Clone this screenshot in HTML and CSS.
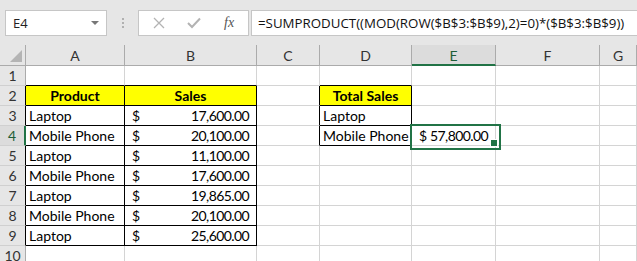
FILE: index.html
```html
<!DOCTYPE html>
<html lang="en">
<head>
  <meta charset="UTF-8">
  <title>SUMPRODUCT every other row</title>
  <link rel="stylesheet" href="styles.css">
</head>
<body>
  <div class="toolbar">
    <div class="namebox">
      <span>E4</span>
      <span class="caret"></span>
    </div>
    <div class="grip"><i></i><i></i><i></i></div>
    <div class="fxbox">
      <svg class="btn" width="12" height="12" viewBox="0 0 12 12">
        <path d="M1 1 L11 11 M11 1 L1 11" stroke="#b3b3b3" stroke-width="1.3" fill="none"/>
      </svg>
      <svg class="btn" width="14" height="12" viewBox="0 0 14 12">
        <path d="M1 6 L5 10 L13 1.5" stroke="#b3b3b3" stroke-width="2" fill="none"/>
      </svg>
      <span class="fx">fx</span>
    </div>
    <div class="formula">=SUMPRODUCT((MOD(ROW($B$3:$B$9),2)=0)*($B$3:$B$9))</div>
  </div>

  <div class="sheet">
    <!-- column headers -->
    <div class="hd corner"><span class="tri"></span></div>
    <div class="hd">A</div>
    <div class="hd">B</div>
    <div class="hd">C</div>
    <div class="hd">D</div>
    <div class="hd sel-col">E</div>
    <div class="hd">F</div>
    <div class="hd">G</div>

    <!-- row 1 -->
    <div class="rh">1</div>
    <div class="c bb"></div>
    <div class="c bb"></div>
    <div class="c"></div>
    <div class="c bb"></div>
    <div class="c"></div>
    <div class="c"></div>
    <div class="c"></div>

    <!-- row 2 -->
    <div class="rh br">2</div>
    <div class="c box head">Product</div>
    <div class="c box head">Sales</div>
    <div class="c br"></div>
    <div class="c box head">Total Sales</div>
    <div class="c"></div>
    <div class="c"></div>
    <div class="c"></div>

    <!-- row 3 -->
    <div class="rh br">3</div>
    <div class="c box">Laptop</div>
    <div class="c box money"><span>$</span><span class="num">17,600.00</span></div>
    <div class="c br"></div>
    <div class="c box">Laptop</div>
    <div class="c"></div>
    <div class="c"></div>
    <div class="c"></div>

    <!-- row 4 -->
    <div class="rh sel-row">4</div>
    <div class="c box">Mobile Phone</div>
    <div class="c box money"><span>$</span><span class="num">20,100.00</span></div>
    <div class="c br"></div>
    <div class="c box">Mobile Phone</div>
    <div class="c active money"><span>$</span><span class="num">57,800.00</span></div>
    <div class="c"></div>
    <div class="c"></div>

    <!-- row 5 -->
    <div class="rh br">5</div>
    <div class="c box">Laptop</div>
    <div class="c box money"><span>$</span><span class="num">11,100.00</span></div>
    <div class="c"></div>
    <div class="c"></div>
    <div class="c"></div>
    <div class="c"></div>
    <div class="c"></div>

    <!-- row 6 -->
    <div class="rh br">6</div>
    <div class="c box">Mobile Phone</div>
    <div class="c box money"><span>$</span><span class="num">17,600.00</span></div>
    <div class="c"></div>
    <div class="c"></div>
    <div class="c"></div>
    <div class="c"></div>
    <div class="c"></div>

    <!-- row 7 -->
    <div class="rh br">7</div>
    <div class="c box">Laptop</div>
    <div class="c box money"><span>$</span><span class="num">19,865.00</span></div>
    <div class="c"></div>
    <div class="c"></div>
    <div class="c"></div>
    <div class="c"></div>
    <div class="c"></div>

    <!-- row 8 -->
    <div class="rh br">8</div>
    <div class="c box">Mobile Phone</div>
    <div class="c box money"><span>$</span><span class="num">20,100.00</span></div>
    <div class="c"></div>
    <div class="c"></div>
    <div class="c"></div>
    <div class="c"></div>
    <div class="c"></div>

    <!-- row 9 -->
    <div class="rh br">9</div>
    <div class="c box">Laptop</div>
    <div class="c box money"><span>$</span><span class="num">25,600.00</span></div>
    <div class="c"></div>
    <div class="c"></div>
    <div class="c"></div>
    <div class="c"></div>
    <div class="c"></div>

    <!-- row 10 -->
    <div class="rh">10</div>
    <div class="c"></div>
    <div class="c"></div>
    <div class="c"></div>
    <div class="c"></div>
    <div class="c"></div>
    <div class="c"></div>
    <div class="c"></div>
  </div>
</body>
</html>
```

FILE: styles.css
```css
* {
  margin: 0;
  padding: 0;
  box-sizing: border-box;
}

body {
  background: #ffffff;
  font-family: 'Lato', 'Liberation Sans', sans-serif;
  color: #000;
  overflow: hidden;
}

/* formula bar */
.toolbar {
  height: 45px;
  background: #e6e6e6;
  display: flex;
  align-items: flex-start;
  padding: 10px 0 0 5px;
}

.namebox {
  width: 102px;
  height: 26px;
  background: #fff;
  border: 1px solid #c6c6c6;
  display: flex;
  align-items: center;
  justify-content: space-between;
  padding: 0 7px 0 7px;
  font-family: 'Open Sans', sans-serif;
  font-size: 13px;
  color: #222;
}

.caret {
  width: 0;
  height: 0;
  border-left: 4px solid transparent;
  border-right: 4px solid transparent;
  border-top: 4px solid #777;
}

.grip {
  width: 31px;
  height: 26px;
  display: flex;
  flex-direction: column;
  align-items: center;
  justify-content: center;
  gap: 2px;
}

.grip i {
  width: 2px;
  height: 2px;
  background: #b0b0b0;
}

.fxbox {
  width: 111px;
  height: 26px;
  background: #fff;
  border: 1px solid #c6c6c6;
  display: flex;
  align-items: center;
  padding-left: 14px;
  gap: 22px;
}

.fx {
  font-family: 'Liberation Serif', serif;
  font-style: italic;
  font-size: 14px;
  color: #555;
  margin-left: 1px;
}

.formula {
  flex: 1;
  margin-left: 2px;
  height: 26px;
  background: #fff;
  border: 1px solid #c6c6c6;
  border-right: none;
  padding-left: 6px;
  font-family: 'Open Sans', sans-serif;
  font-size: 13.3px;
  line-height: 24px;
  white-space: nowrap;
  overflow: hidden;
  color: #111;
}

/* grid */
.sheet {
  display: grid;
  grid-template-columns: 26px 99px 132px 63px 92px 84px 104px 1fr;
  grid-template-rows: 21px repeat(10, 20px);
  font-size: 14px;
}

.hd {
  background: #e6e6e6;
  border-right: 1px solid #ababab;
  border-bottom: 1px solid #ababab;
  text-align: center;
  line-height: 21px;
  color: #333;
}

.corner {
  position: relative;
}

.tri {
  position: absolute;
  right: 3px;
  bottom: 3px;
  width: 0;
  height: 0;
  border-left: 12px solid transparent;
  border-bottom: 12px solid #b4b4b4;
}

.sel-col {
  color: #1e5e38;
  border-bottom: 2px solid #217346;
  background: #dcdcdc;
}

.rh {
  background: #e6e6e6;
  border-right: 1px solid #ababab;
  border-bottom: 1px solid #d0d0d0;
  text-align: center;
  line-height: 19px;
  color: #333;
}

.rh.br {
  border-right-color: #000;
}

.sel-row {
  color: #1e5e38;
  background: #dcdcdc;
  border-right: 2px solid #217346;
}

.c {
  border-right: 1px solid #d4d4d4;
  border-bottom: 1px solid #d4d4d4;
  padding: 0 3px;
  line-height: 19px;
  white-space: nowrap;
}

.c.bb {
  border-bottom-color: #000;
}

.c.br {
  border-right-color: #000;
}

.c.box {
  border-right-color: #000;
  border-bottom-color: #000;
}

.head {
  background: #ffff00;
  font-weight: bold;
  text-align: center;
}

.money {
  display: flex;
  justify-content: space-between;
  padding: 0 7px 0 7px;
}

.num {
  letter-spacing: -0.6px;
}

.active {
  position: relative;
}

.active::after {
  content: "";
  position: absolute;
  left: -2px;
  top: -2px;
  width: 87px;
  height: 22px;
  border: 2px solid #217346;
}

.active::before {
  content: "";
  position: absolute;
  right: -3px;
  bottom: -2px;
  width: 6px;
  height: 6px;
  background: #217346;
  border: 1px solid #fff;
  z-index: 1;
}
```
